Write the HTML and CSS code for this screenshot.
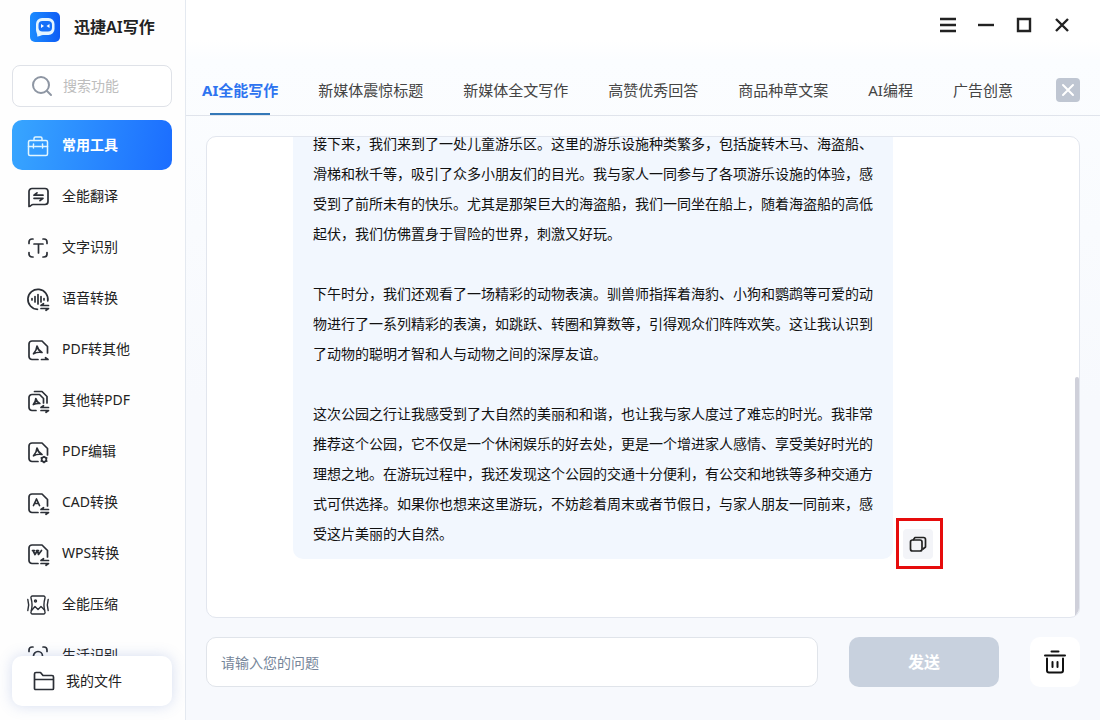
FILE: index.html
```html
<!DOCTYPE html>
<html lang="zh-CN">
  <head>
    <meta charset="UTF-8" />
    <meta name="viewport" content="width=device-width, initial-scale=1.0" />
    <title>迅捷AI写作</title>
    <link rel="stylesheet" href="styles.css">
  </head>
  <body>
    <!-- Shapes shared by the sidebar icons -->
    <svg class="defs" aria-hidden="true">
      <symbol id="doc" viewBox="0 0 24 24">
        <path d="M12 20.500H6a3 3 0 0 1-3-3V5a3 3 0 0 1 3-3h10l5.500 5.500V14" />
      </symbol>
      <symbol id="acrobat" viewBox="0 0 24 24">
        <path d="M11 7c.8 3.200 2.500 5.200 5 6.500-3-.6-5.700-.2-8.500 1.300 2-2.300 3.300-4.800 3.500-7.800z" />
      </symbol>
      <symbol id="swap" viewBox="0 0 24 24">
        <path d="M22.500 17.500H15l2.500-1.800M15 20.500h7.500L20 22.300" />
      </symbol>
      <symbol id="frame" viewBox="0 0 24 24">
        <path d="M3 6.500V5a3 3 0 0 1 3-3h1M17 2h1a3 3 0 0 1 3 3v1.500M21 15.500V17a3 3 0 0 1-3 3h-1M7 20H6a3 3 0 0 1-3-3v-1.500" />
      </symbol>
    </svg>

    <aside class="sidebar">
      <div class="brand">
        <svg class="logo" viewBox="0 0 30 30">
          <defs>
            <linearGradient id="logoFill" x1="0" y1="0" x2="1" y2="0">
              <stop offset="0" stop-color="#1c8cff" />
              <stop offset="1" stop-color="#0d5cf5" />
            </linearGradient>
          </defs>
          <rect width="30" height="30" rx="5" fill="url(#logoFill)" />
          <path d="M12 6h6.500a6 6 0 0 1 6 6v5a6 6 0 0 1-6 6H13c-2 0-3 1.500-6 1.500 1-1.500-.5-3-1-6.500v-6a6 6 0 0 1 6-6z" fill="#e4f5ff" />
          <rect x="8.500" y="9" width="13.500" height="10.500" rx="4" fill="#1670f8" />
          <path d="M11 12l3 2-3 2zM19.500 12v4l-3-2z" fill="#fff" />
        </svg>
        <h1>迅捷AI写作</h1>
      </div>

      <label class="search">
        <svg class="search-icon" viewBox="0 0 22 22">
          <circle cx="10" cy="10" r="8" />
          <path d="M16 16l4 4" />
        </svg>
        <input type="search" placeholder="搜索功能" aria-label="搜索功能" />
      </label>

      <nav class="menu">
        <a class="menu-item active" href="#">
          <svg class="icon" viewBox="0 0 24 24">
            <rect x="2.500" y="5.500" width="19" height="15" rx="1.500" />
            <path d="M8 5.500V3.500A1.500 1.500 0 0 1 9.500 2h5A1.500 1.500 0 0 1 16 3.500v2M2.500 11.500h4M9 11.500h6M17.500 11.500h4M7.500 9v4M16.500 9v4" />
          </svg>
          常用工具
        </a>
        <a class="menu-item" href="#">
          <svg class="icon" viewBox="0 0 24 24">
            <path d="M3 20.500V5.500a3 3 0 0 1 3-3h13a3 3 0 0 1 3 3v10a3 3 0 0 1-3 3H7c-2 0-2 2-4 2z" />
            <path d="M17 9.200H8l3-2.400M8 12.300h9l-3 2.400" />
          </svg>
          全能翻译
        </a>
        <a class="menu-item" href="#">
          <svg class="icon" viewBox="0 0 24 24">
            <use href="#frame" />
            <path d="M8 7h9M12.500 7v9" />
          </svg>
          文字识别
        </a>
        <a class="menu-item" href="#">
          <svg class="icon" viewBox="0 0 24 24">
            <path d="M11.500 21.300a10 10 0 1 1 10.300-8.500" />
            <path d="M6 10.500v1.500M9 8.500v5.500M12 6.500v9.500M15 8.500v5.500M18 10.500v1.500" />
            <use href="#swap" />
          </svg>
          语音转换
        </a>
        <a class="menu-item" href="#">
          <svg class="icon" viewBox="0 0 24 24">
            <use href="#doc" />
            <use href="#acrobat" />
            <path d="M15.500 20.500H22L19.500 18.700" />
          </svg>
          PDF转其他
        </a>
        <a class="menu-item" href="#">
          <svg class="icon" viewBox="0 0 24 24">
            <path d="M10 20.500H6a3 3 0 0 1-3-3V7.500a3 3 0 0 1 3-3h7.500l4 4V13" />
            <path d="M8.500 1.500H16L21 6.500V13" />
            <path d="M9.800 8.500c.7 2.400 2 4 4 5-2.400-.4-4.300 0-6.500 1 1.600-1.700 2.500-3.700 2.500-6z" />
            <use href="#swap" />
          </svg>
          其他转PDF
        </a>
        <a class="menu-item" href="#">
          <svg class="icon" viewBox="0 0 24 24">
            <use href="#doc" />
            <use href="#acrobat" />
            <circle cx="18" cy="18.500" r="2.300" />
            <path d="M18 15.800v-.3M18 21.500v-.3M20.500 17.100l.2-.1M20.500 19.900l.2.100M15.500 17.100l-.2-.1M15.500 19.900l-.2.100" />
          </svg>
          PDF编辑
        </a>
        <a class="menu-item" href="#">
          <svg class="icon" viewBox="0 0 24 24">
            <use href="#doc" />
            <path d="M7.500 13.500l3-6.500 3 6.500M9 11.500h3" />
            <use href="#swap" />
          </svg>
          CAD转换
        </a>
        <a class="menu-item" href="#">
          <svg class="icon" viewBox="0 0 24 24">
            <use href="#doc" />
            <path d="M7 7.500l2 4 2.500-4 1 4 3-4M6.500 7.500h2M10.500 7.500h2" />
            <use href="#swap" />
          </svg>
          WPS转换
        </a>
        <a class="menu-item" href="#">
          <svg class="icon thin" viewBox="0 0 24 24">
            <path d="M6.500 2h11a1.500 1.500 0 0 1 1.500 2c-1.500 5-1.500 9 0 14a1.500 1.500 0 0 1-1.500 2h-11A1.500 1.500 0 0 1 5 18c1.500-5 1.500-9 0-14a1.500 1.500 0 0 1 1.500-2z" />
            <path d="M5.500 16.500L9 12.500l3 3 3-3 3.500 3.500M1.800 5.500c1.300 4 1.300 7 0 11M22.200 5.500c-1.300 4-1.300 7 0 11" />
            <circle cx="9.500" cy="7" r="1" />
          </svg>
          全能压缩
        </a>
        <a class="menu-item" href="#">
          <svg class="icon" viewBox="0 0 24 24">
            <use href="#frame" />
            <circle cx="12" cy="11" r="4.500" />
          </svg>
          生活识别
        </a>
      </nav>

      <a class="my-files" href="#">
        <svg class="icon" viewBox="0 0 24 24">
          <path d="M2.500 19.500V5A1.500 1.500 0 0 1 4 3.500h4.500L11 6.500h9A1.500 1.500 0 0 1 21.500 8v11.500a1 1 0 0 1-1 1h-17a1 1 0 0 1-1-1zM2.500 10.500h19" />
        </svg>
        我的文件
      </a>
    </aside>

    <main>
      <header class="window-bar">
        <button type="button" aria-label="菜单">
          <svg viewBox="0 0 18 18"><path d="M1 3h16M1 9h16M1 15h16" /></svg>
        </button>
        <button type="button" aria-label="最小化">
          <svg viewBox="0 0 18 18"><path d="M1 9h16" /></svg>
        </button>
        <button type="button" aria-label="最大化">
          <svg viewBox="0 0 18 18"><path d="M3 3h12v12H3z" /></svg>
        </button>
        <button type="button" aria-label="关闭">
          <svg viewBox="0 0 18 18"><path d="M3 3l12 12M15 3L3 15" /></svg>
        </button>
      </header>

      <div class="tab-bar">
        <button type="button" class="tab selected">AI全能写作</button>
        <button type="button" class="tab">新媒体震惊标题</button>
        <button type="button" class="tab">新媒体全文写作</button>
        <button type="button" class="tab">高赞优秀回答</button>
        <button type="button" class="tab">商品种草文案</button>
        <button type="button" class="tab">AI编程</button>
        <button type="button" class="tab">广告创意</button>
        <button type="button" class="close-tabs" aria-label="关闭标签">
          <svg viewBox="0 0 24 24"><path d="M7 7l10 10M17 7L7 17" /></svg>
        </button>
      </div>

      <section class="chat">
        <div class="message">
          <div class="bubble">
            <p>接下来，我们来到了一处儿童游乐区。这里的游乐设施种类繁多，包括旋转木马、海盗船、滑梯和秋千等，吸引了众多小朋友们的目光。我与家人一同参与了各项游乐设施的体验，感受到了前所未有的快乐。尤其是那架巨大的海盗船，我们一同坐在船上，随着海盗船的高低起伏，我们仿佛置身于冒险的世界，刺激又好玩。</p>
            <p>下午时分，我们还观看了一场精彩的动物表演。驯兽师指挥着海豹、小狗和鹦鹉等可爱的动物进行了一系列精彩的表演，如跳跃、转圈和算数等，引得观众们阵阵欢笑。这让我认识到了动物的聪明才智和人与动物之间的深厚友谊。</p>
            <p>这次公园之行让我感受到了大自然的美丽和和谐，也让我与家人度过了难忘的时光。我非常推荐这个公园，它不仅是一个休闲娱乐的好去处，更是一个增进家人感情、享受美好时光的理想之地。在游玩过程中，我还发现这个公园的交通十分便利，有公交和地铁等多种交通方式可供选择。如果你也想来这里游玩，不妨趁着周末或者节假日，与家人朋友一同前来，感受这片美丽的大自然。</p>
          </div>
          <button type="button" class="copy" aria-label="复制">
            <svg viewBox="0 0 18 18">
              <rect x="1.500" y="5" width="11.500" height="11" rx="2" />
              <path d="M4.500 4.500L6 2.500h8.500a2 2 0 0 1 2 2v7.500l-2.500 2" />
            </svg>
          </button>
        </div>
        <div class="scroll-thumb"></div>
      </section>

      <form class="composer">
        <input type="text" placeholder="请输入您的问题" aria-label="请输入您的问题" />
        <button type="submit" class="send">发送</button>
        <button type="button" class="clear" aria-label="清空">
          <svg viewBox="0 0 24 24">
            <path d="M8.500 1.500h7M2 5.500h20M4 8.500v12a2 2 0 0 0 2 2h12a2 2 0 0 0 2-2v-12M9.500 12v5M14.500 12v5" />
          </svg>
        </button>
      </form>
    </main>
  </body>
</html>
```
FILE: styles.css
```css
* {
  box-sizing: border-box;
}

body {
  font-family: "Noto Sans", "Noto Sans CJK SC", sans-serif;
  font-size: 14px;
  color: #222;
  margin: 0;
  display: flex;
  height: 100vh;
  overflow: hidden;
}

button,
input {
  font-family: inherit;
  font-size: inherit;
  border: none;
  padding: 0;
}

button {
  cursor: pointer;
  background: none;
}

a {
  color: inherit;
  text-decoration: none;
}

svg {
  display: block;
  fill: none;
  stroke-linecap: round;
  stroke-linejoin: round;
}

.defs {
  display: none;
}

/* Sidebar */
.sidebar {
  flex: none;
  display: flex;
  flex-direction: column;
  width: 186px;
  padding: 12px 13px 14px 12px;
  background-color: #fefefe;
  border-right: 1px solid #e4e9f0;
}

.brand {
  display: flex;
  align-items: center;
  gap: 14px;
  padding-left: 18px;
}

.logo {
  width: 30px;
  height: 30px;
}

h1 {
  margin: 0;
  font-size: 16px;
  font-weight: 600;
  line-height: 30px;
}

.search {
  display: flex;
  align-items: center;
  gap: 10px;
  height: 42px;
  margin: 23px 0 13px;
  padding: 0 18px;
  background-color: #fff;
  border: 1px solid #dfe2e8;
  border-radius: 8px;
}

.search-icon {
  flex: none;
  width: 22px;
  height: 22px;
  stroke: #8e96a3;
  stroke-width: 2;
}

.search input {
  flex: 1;
  min-width: 0;
  padding-bottom: 2px;
  background: none;
  outline: none;
}

.search input::placeholder {
  color: #bdbdbd;
}

.menu {
  flex: 1;
  display: flex;
  flex-direction: column;
  gap: 1px;
  min-height: 0;
  overflow: hidden;
}

.menu-item,
.my-files {
  flex: none;
  display: flex;
  align-items: center;
  gap: 12px;
  height: 50px;
  padding: 0 0 2px 14px;
  border-radius: 10px;
}

.menu-item.active {
  color: #fff;
  font-weight: 700;
  background: linear-gradient(100deg, #38a6ff, #1b6dff);
}

.icon {
  width: 24px;
  height: 24px;
  margin-top: 6px;
  stroke: #2b2f36;
  stroke-width: 1.7;
}

.icon.thin {
  stroke-width: 1.4;
}

.active .icon {
  stroke: #e2f6ff;
  stroke-width: 1.5;
}

.my-files {
  gap: 10px;
  padding-left: 20px;
  background-color: #fff;
  box-shadow: 0 0 14px rgba(90, 125, 200, 0.25);
  z-index: 1;
}

.my-files .icon {
  margin-top: 2px;
}

/* Main area */
main {
  flex: 1;
  min-width: 0;
  display: flex;
  flex-direction: column;
  background: linear-gradient(#fff 40px, #fbfdff 60px, #f7f9fd 400px);
}

.window-bar {
  display: flex;
  align-items: center;
  justify-content: flex-end;
  gap: 20px;
  height: 50px;
  padding-right: 29px;
}

.window-bar svg {
  width: 18px;
  height: 18px;
  stroke: #222;
  stroke-width: 2.4;
  stroke-linecap: butt;
  stroke-linejoin: miter;
}

.tab-bar {
  display: flex;
  align-items: center;
  gap: 40px;
  padding: 16px 20px 0 16px;
  border-bottom: 1px solid #e0e4ec;
}

.tab {
  position: relative;
  flex: none;
  height: 49px;
  padding-bottom: 2px;
  font-size: 15px;
  color: #444;
}

.tab.selected {
  color: #2e74f0;
  font-weight: 700;
}

.tab.selected::after {
  content: "";
  position: absolute;
  left: 8px;
  right: 8px;
  bottom: 0;
  height: 2px;
  background-color: #3478b8;
}

.close-tabs {
  width: 24px;
  height: 24px;
  margin: 0 0 2px auto;
  background-color: #bfc6d2;
  border-radius: 4px;
}

.close-tabs svg {
  stroke: #fff;
  stroke-width: 2;
}

/* Conversation */
.chat {
  position: relative;
  flex: 1;
  min-height: 0;
  display: flex;
  flex-direction: column;
  justify-content: flex-end;
  margin: 20px 20px 0;
  padding: 0 146px 58px 86px;
  overflow: hidden;
  background-color: #fff;
  border: 1px solid #e2e6ee;
  border-radius: 10px;
}

.message {
  display: flex;
  align-items: flex-end;
  gap: 10px;
}

.bubble {
  flex: 1;
  padding: 10px 20px;
  color: #111;
  line-height: 30px;
  background-color: #f2f7fe;
  border-radius: 10px;
}

.bubble p {
  margin: 0 0 30px;
}

.bubble p:last-child {
  margin-bottom: 0;
}

.copy {
  position: relative;
  display: flex;
  align-items: center;
  justify-content: center;
  width: 30px;
  height: 30px;
  background-color: #f3f4f8;
  border-radius: 4px;
}

.copy svg {
  width: 18px;
  height: 18px;
  stroke: #222;
  stroke-width: 1.7;
}

/* Red marker around the copy button */
.copy::after {
  content: "";
  position: absolute;
  inset: -11px -10px -10px -7px;
  border: 3px solid #e60c0c;
}

.scroll-thumb {
  position: absolute;
  right: 0;
  bottom: 0;
  width: 4px;
  height: 50%;
  background-color: #cfd0da;
  border-radius: 2px;
}

/* Input row */
.composer {
  display: flex;
  gap: 31px;
  padding: 19px 20px 33px;
}

.composer input {
  flex: 1;
  min-width: 0;
  height: 50px;
  padding: 0 14px;
  background-color: #fff;
  border: 1px solid #e0e4ea;
  border-radius: 10px;
  outline: none;
}

.composer input::placeholder {
  color: #76869a;
}

.send {
  width: 150px;
  padding-bottom: 2px;
  color: #fff;
  font-size: 16px;
  font-weight: 700;
  background-color: #c8d1de;
  border-radius: 10px;
}

.clear {
  display: flex;
  align-items: center;
  justify-content: center;
  width: 50px;
  background-color: #fff;
  border-radius: 10px;
}

.clear svg {
  width: 24px;
  height: 24px;
  stroke: #111;
  stroke-width: 2;
}
```
